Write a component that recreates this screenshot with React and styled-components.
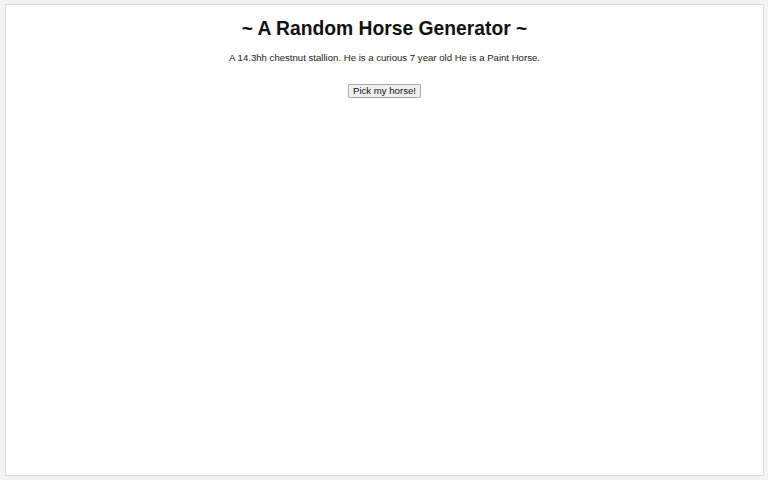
import React, { useState } from 'react';
import styled, { createGlobalStyle } from 'styled-components';

const GlobalStyle = createGlobalStyle`
  html, body {
    margin: 0;
    height: 100%;
    background: #f3f3f3;
    font-family: "Liberation Sans", Arial, sans-serif;
  }
  #root {
    height: 100%;
  }
`;

const Page = styled.div`
  box-sizing: border-box;
  height: 100%;
  padding: 4px 4px 4px 5px;
  display: flex;
`;

const Card = styled.div`
  flex: 1;
  background: #fff;
  border: 1px solid #dcdcdc;
  text-align: center;
  padding-top: 14px;
`;

const Title = styled.h1`
  margin: 0;
  font-size: 19.3px;
  font-weight: bold;
  color: #111;
  line-height: 20px;
`;

const Blurb = styled.p`
  margin: 13px 0 0;
  font-size: 9.6px;
  line-height: 12px;
  color: #222;
`;

const PickButton = styled.button`
  box-sizing: border-box;
  margin-top: 20px;
  height: 14px;
  font-family: "Liberation Sans", Arial, sans-serif;
  font-size: 9.6px;
  line-height: 10px;
  padding: 0 4px;
  background: #f0f0f0;
  border: 1px solid #a8a8a8;
  border-radius: 1px;
  color: #111;
`;

export default function App() {
  const [horse] = useState(
    'A 14.3hh chestnut stallion. He is a curious 7 year old He is a Paint Horse.'
  );
  return (
    <>
      <GlobalStyle />
      <Page>
        <Card>
          <Title>~ A Random Horse Generator ~</Title>
          <Blurb>{horse}</Blurb>
          <PickButton>Pick my horse!</PickButton>
        </Card>
      </Page>
    </>
  );
}
